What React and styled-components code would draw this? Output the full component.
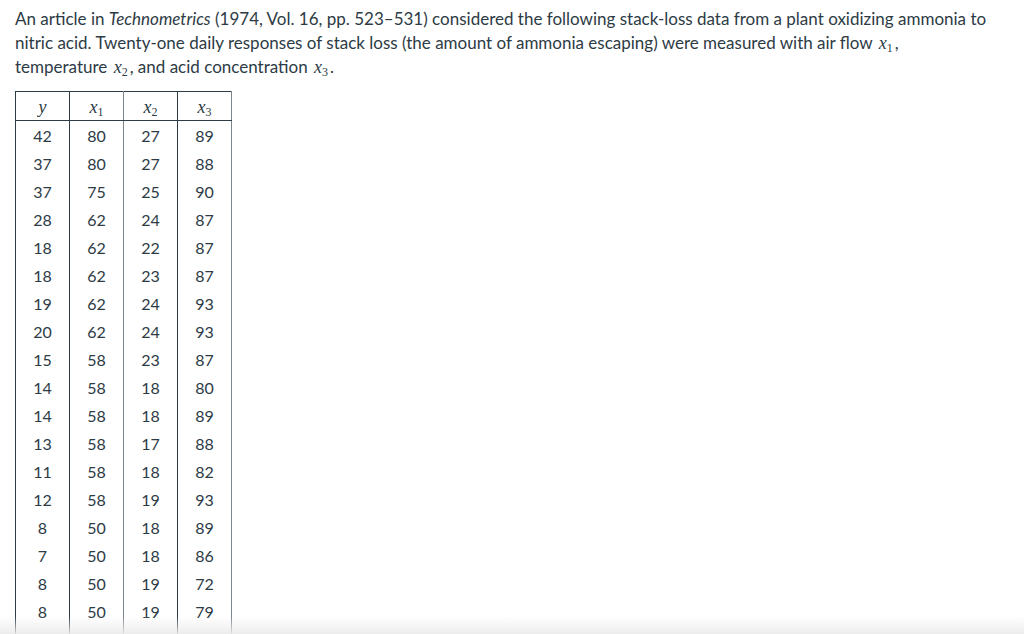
import React from "react";
import styled, { createGlobalStyle } from "styled-components";

const GlobalStyle = createGlobalStyle`
  body {
    margin: 0;
    background: #fff;
    font-family: Lato, "Open Sans", sans-serif;
    color: #2d3b45;
  }
`;

const Page = styled.div`
  padding: 7px 15px 0;
  height: 634px;
  overflow: hidden;
  box-sizing: border-box;
`;

const Intro = styled.p`
  margin: 0 0 12px;
  font-size: 17px;
  line-height: 24px;
  max-width: 976px;
`;

const Math = styled.span`
  font-family: "Liberation Serif", "DejaVu Serif", serif;
  font-style: italic;
  font-size: 18px;
  padding: 0 2px;
  line-height: 0;

  sub {
    font-style: normal;
    font-size: 12px;
    vertical-align: -3px;
    line-height: 0;
  }
`;

const Table = styled.table`
  border-collapse: collapse;
  font-size: 16px;
`;

const Cell = styled.td`
  width: 53px;
  height: 28px;
  padding: 0;
  text-align: center;
  border-left: 1px solid ${(p) => (p.$soft ? "#7c858c" : "#2d3b45")};
  border-right: 1px solid ${(p) => (p.$soft ? "#7c858c" : "#2d3b45")};
`;

const Head = styled(Cell).attrs({ as: "th" })`
  height: 28px;
  font-weight: normal;
  border-top: 1px solid #2d3b45;
  border-bottom: 1px solid #2d3b45;
`;

const Fade = styled.div`
  position: fixed;
  left: 0;
  right: 0;
  bottom: 0;
  height: 18px;
  background: linear-gradient(to bottom, rgba(240, 240, 240, 0), rgba(235, 235, 235, 0.9));
  pointer-events: none;
`;

const rows = [
  [42, 80, 27, 89],
  [37, 80, 27, 88],
  [37, 75, 25, 90],
  [28, 62, 24, 87],
  [18, 62, 22, 87],
  [18, 62, 23, 87],
  [19, 62, 24, 93],
  [20, 62, 24, 93],
  [15, 58, 23, 87],
  [14, 58, 18, 80],
  [14, 58, 18, 89],
  [13, 58, 17, 88],
  [11, 58, 18, 82],
  [12, 58, 19, 93],
  [8, 50, 18, 89],
  [7, 50, 18, 86],
  [8, 50, 19, 72],
  [8, 50, 19, 79],
  [9, 50, 20, 80],
  [15, 56, 20, 82],
  [15, 70, 20, 91],
];

const X = ({ n }) => (
  <Math>
    x<sub>{n}</sub>
  </Math>
);

export default function App() {
  return (
    <Page>
      <GlobalStyle />
      <Intro>
        An article in <em>Technometrics</em> (1974, Vol. 16, pp. 523–531) considered the following
        stack-loss data from a plant oxidizing ammonia to nitric acid. Twenty-one daily responses of
        stack loss (the amount of ammonia escaping) were measured with air flow <X n={1} />,
        temperature <X n={2} />, and acid concentration <X n={3} />.
      </Intro>
      <Table>
        <thead>
          <tr>
            <Head>
              <Math>y</Math>
            </Head>
            <Head $soft>
              <X n={1} />
            </Head>
            <Head>
              <X n={2} />
            </Head>
            <Head $soft>
              <X n={3} />
            </Head>
          </tr>
        </thead>
        <tbody>
          {rows.map((r, i) => (
            <tr key={i}>
              {r.map((v, j) => (
                <Cell key={j} $soft={j % 2 === 1}>
                  {v}
                </Cell>
              ))}
            </tr>
          ))}
        </tbody>
      </Table>
      <Fade />
    </Page>
  );
}
